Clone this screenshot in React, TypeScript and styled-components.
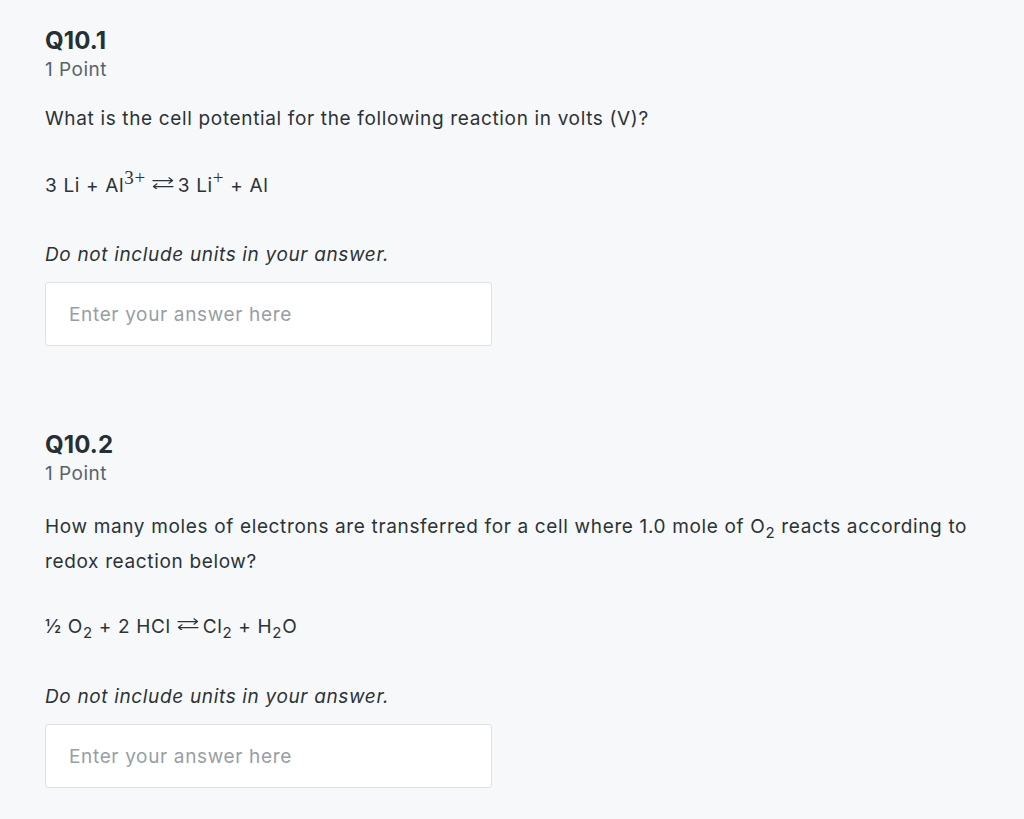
import React from "react";
import styled, { createGlobalStyle } from "styled-components";

const Global = createGlobalStyle`
  html, body { margin: 0; padding: 0; background: #f7f8fa; }
  body { font-family: Inter, "Open Sans", sans-serif; color: #2b3336; }
`;

const Page = styled.div`
  padding: 26px 45px 30px 45px;
  display: flex;
  flex-direction: column;
  gap: 84px;
`;

const Question = styled.section`
  display: flex;
  flex-direction: column;
`;

const Title = styled.h2`
  margin: 0;
  font-size: 24px;
  line-height: 30px;
  font-weight: 700;
  color: #243033;
  letter-spacing: 0.1px;
`;

const Points = styled.div`
  font-size: 19px;
  line-height: 26px;
  color: #59636a;
  margin-top: 1px;
  letter-spacing: 0.5px;
`;

const Text = styled.p<{ $gap?: number }>`
  margin: ${(p) => p.$gap ?? 19}px 0 0 0;
  font-size: 19px;
  line-height: 34px;
  letter-spacing: 0.65px;
  color: #2b3336;
  max-width: 950px;
`;

const Script = styled.span<{ $up?: boolean }>`
  font-size: ${(p) => (p.$up ? "19px" : "15px")};
  position: relative;
  top: ${(p) => (p.$up ? "-8px" : "5px")};
  font-family: ${(p) => (p.$up ? '"Liberation Serif", serif' : "inherit")};
`;

const Equation = styled.p<{ $gap?: number }>`
  margin: ${(p) => p.$gap ?? 33}px 0 0 0;
  font-size: 19px;
  line-height: 34px;
  letter-spacing: 0.65px;
  color: #2b3336;
`;

const ArrowSvg = styled.svg`
  display: inline-block;
  width: 22px;
  height: 12px;
  margin: 0 4px 0 6px;
  vertical-align: 3px;
`;

const Arrow = () => (
  <ArrowSvg viewBox="0 0 22 12" fill="none" stroke="#2b3336" strokeWidth="1.25" strokeLinecap="round" strokeLinejoin="round">
    <path d="M1 3.5H20.5M17 0.8L20.5 3.5L17 6.2" />
    <path d="M21 9.5H1.5M5 6.8L1.5 9.5L5 12.2" />
  </ArrowSvg>
);

const Note = styled.p`
  margin: 35px 0 0 0;
  font-size: 19px;
  line-height: 34px;
  letter-spacing: 0.65px;
  font-style: italic;
  color: #2b3336;
`;

const Input = styled.input`
  margin-top: 10px;
  width: 447px;
  height: 64px;
  box-sizing: border-box;
  border: 1px solid #dde1e6;
  border-radius: 3px;
  background: #ffffff;
  padding: 0 23px;
  font-family: Inter, "Open Sans", sans-serif;
  font-size: 19px;
  letter-spacing: 0.65px;
  color: #2b3336;
  outline: none;
  &::placeholder { color: #979ea5; }
`;

export default function App() {
  return (
    <>
      <Global />
      <Page>
        <Question>
          <Title>Q10.1</Title>
          <Points>1 Point</Points>
          <Text>What is the cell potential for the following reaction in volts (V)?</Text>
          <Equation>
            3 Li + Al<Script $up>3+</Script><Arrow />3 Li<Script $up>+</Script> + Al
          </Equation>
          <Note>Do not include units in your answer.</Note>
          <Input placeholder="Enter your answer here" />
        </Question>
        <Question>
          <Title>Q10.2</Title>
          <Points>1 Point</Points>
          <Text $gap={23}>
            How many moles of electrons are transferred for a cell where 1.0 mole of O<Script>2</Script> reacts according to redox reaction below?
          </Text>
          <Equation $gap={31}>
            ½ O<Script>2</Script> + 2 HCl<Arrow />Cl<Script>2</Script> + H<Script>2</Script>O
          </Equation>
          <Note>Do not include units in your answer.</Note>
          <Input placeholder="Enter your answer here" />
        </Question>
      </Page>
    </>
  );
}
